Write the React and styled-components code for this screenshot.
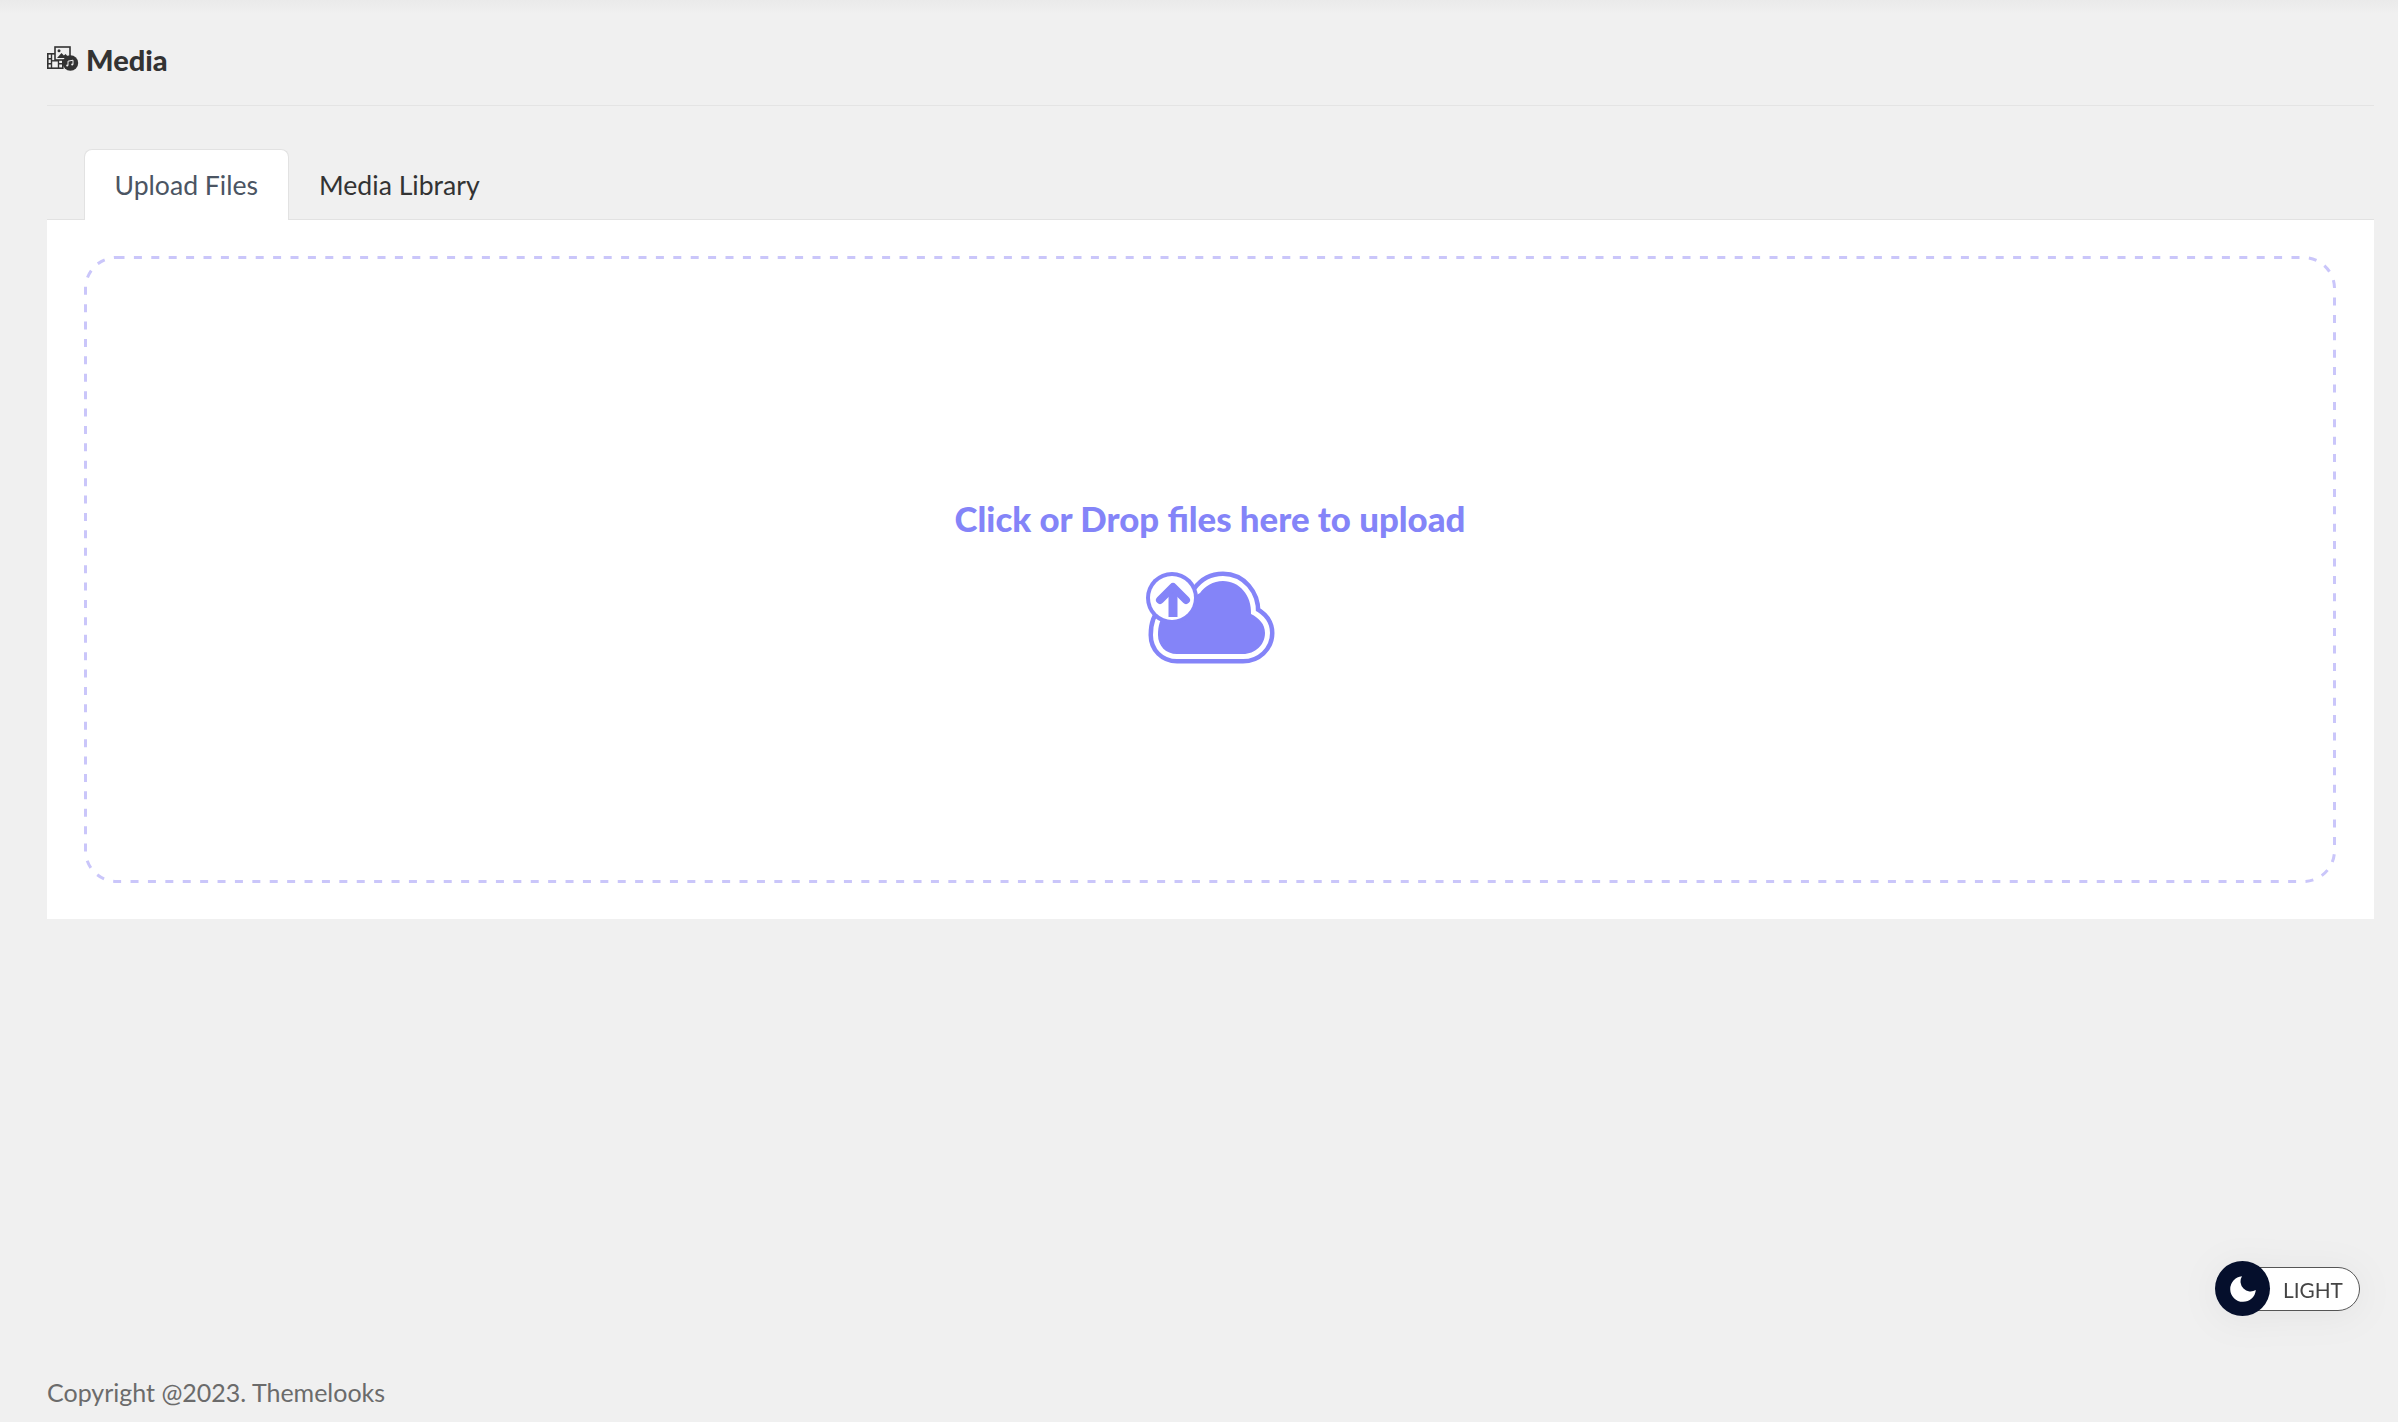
import styled, { createGlobalStyle } from "styled-components";

const GlobalStyle = createGlobalStyle`
  * { box-sizing: border-box; }
  html, body { margin: 0; padding: 0; }
  body {
    background: #f0f0f0;
    font-family: Lato, "Noto Sans", sans-serif;
  }
`;

const MediaIcon = () => (
  <svg width="32" height="26" viewBox="0 0 32 26">
    <rect x="0.8" y="7.8" width="15" height="14.4" fill="#f0f0f0" stroke="#333" strokeWidth="1.6" />
    <path d="M0 12h4v1.6H0zM0 17h4v1.6H0zM12 12h4v1.6h-4zM12 17h4v1.6h-4z" fill="#333" />
    <path d="M4.5 8v14M11.5 8v14" stroke="#333" strokeWidth="1.4" />
    <path d="M4.5 14.8h7" stroke="#333" strokeWidth="1.4" />
    <rect x="8" y="1" width="15" height="13" fill="#f0f0f0" stroke="#333" strokeWidth="1.6" />
    <circle cx="12" cy="4.8" r="1.5" fill="#333" />
    <path d="M10 12l4.5-5 2.4 2.4 1.7-1.4 3.4 4z" fill="#333" />
    <circle cx="23.4" cy="17" r="7.8" fill="#333" />
    <path d="M21 19.5v-4.3l5-1v4.3" fill="none" stroke="#f0f0f0" strokeWidth="1" />
    <circle cx="20.2" cy="19.6" r="1" fill="#f0f0f0" />
    <circle cx="25.2" cy="18.6" r="1" fill="#f0f0f0" />
  </svg>
);

const CLOUD =
  "M20 42C14 47 12 55 12 64C12 75 20 83 31 83H97C109 83 119 74 119 62C119 53 113 47 105 43C106 24 93 10 77 10C67 10 59 15 54 22Z";

const CloudIcon = () => (
  <svg width="130" height="94" viewBox="0 0 130 94">
    <path d={CLOUD} fill="#8484f8" stroke="#8484f8" strokeWidth="19" strokeLinejoin="round" />
    <path d={CLOUD} fill="#8484f8" stroke="#fff" strokeWidth="10" strokeLinejoin="round" />
    <path d={CLOUD} fill="#8484f8" />
    <circle cx="26" cy="27" r="26" fill="#8484f8" />
    <circle cx="26" cy="27" r="22" fill="#fff" />
    <path d="M27 16v30" stroke="#8484f8" strokeWidth="9" />
    <path
      d="M14 29L27 16L40 29"
      fill="none"
      stroke="#8484f8"
      strokeWidth="8"
      strokeLinecap="round"
      strokeLinejoin="round"
    />
  </svg>
);

const Page = styled.div`
  position: relative;
  height: 1422px;
  padding: 0 24px 0 47px;
  display: flex;
  flex-direction: column;
  background: linear-gradient(#eaeaea 0, #f0f0f0 14px);
  overflow: hidden;
`;

const Header = styled.div`
  height: 106px;
  padding-top: 13px;
  display: flex;
  align-items: center;
  gap: 7px;
  border-bottom: 1px solid #e4e4e4;
`;

const Title = styled.h1`
  margin: 0;
  font-size: 29px;
  font-weight: 900;
  color: #333;
`;

const Tabs = styled.div`
  display: flex;
  padding: 43px 0 0 37px;
  border-bottom: 1px solid #e2e2e2;
`;

const Tab = styled.div`
  height: 71px;
  margin-bottom: -1px;
  padding: 0 29.5px;
  display: flex;
  align-items: center;
  font-size: 26.6px;
  color: ${(p) => (p.$active ? "#4b5563" : "#333")};
  background: ${(p) => (p.$active ? "#fff" : "transparent")};
  border: 1px solid ${(p) => (p.$active ? "#e2e2e2" : "transparent")};
  border-bottom: 0;
  border-radius: 8px 8px 0 0;
`;

const Panel = styled.div`
  background: #fff;
  padding: 36px 38px 36px 37px;
`;

const Dropzone = styled.div`
  position: relative;
  height: 627px;
  padding-top: 239px;
  display: flex;
  flex-direction: column;
  align-items: center;
`;

const Outline = styled.svg`
  position: absolute;
  inset: 0;
  width: 100%;
  height: 100%;
  fill: none;
  stroke: #cac6fa;
  stroke-width: 3px;
  stroke-dasharray: 8 9.4;
`;

const DropText = styled.div`
  font-size: 34.8px;
  font-weight: 900;
  color: #8484f8;
  line-height: 48px;
  margin-bottom: 28px;
`;

const CloudWrap = styled.div`
  margin-left: 2px;
  line-height: 0;
`;

const Footer = styled.div`
  margin-top: auto;
  height: 54px;
  line-height: 48px;
  font-size: 25px;
  color: #6b6b6b;
`;

const Toggle = styled.div`
  position: absolute;
  left: 2215px;
  top: 1261px;
  width: 145px;
  height: 55px;
  display: flex;
  align-items: center;
  filter: drop-shadow(0 4px 18px rgba(0, 0, 0, 0.05));
`;

const TogglePill = styled.div`
  position: absolute;
  left: 14px;
  right: 0;
  top: 6px;
  height: 44px;
  padding-left: 53px;
  display: flex;
  align-items: center;
  background: #fff;
  border: 1px solid #555;
  border-radius: 22px;
  font-size: 20.8px;
  color: #444;
`;

const ToggleKnob = styled.div`
  position: relative;
  width: 55px;
  height: 55px;
  border-radius: 50%;
  background: #050f2c;
  display: flex;
  align-items: center;
  justify-content: center;
`;

const App = () => (
  <Page>
    <GlobalStyle />
    <Header>
      <MediaIcon />
      <Title>Media</Title>
    </Header>
    <Tabs>
      <Tab $active>Upload Files</Tab>
      <Tab>Media Library</Tab>
    </Tabs>
    <Panel>
      <Dropzone>
        <Outline>
          <rect x="1.5" y="1.5" width="2249" height="624" rx="31" />
        </Outline>
        <DropText>Click or Drop files here to upload</DropText>
        <CloudWrap>
          <CloudIcon />
        </CloudWrap>
      </Dropzone>
    </Panel>
    <Footer>Copyright @2023. Themelooks</Footer>
    <Toggle>
      <TogglePill>LIGHT</TogglePill>
      <ToggleKnob>
        <svg width="26" height="26" viewBox="0 0 26 26">
          <path d="M12 0.3A12.8 12.8 0 1 0 25.8 14a10 10 0 0 1-13.8-13.7z" fill="#fff" />
        </svg>
      </ToggleKnob>
    </Toggle>
  </Page>
);

export default App;
